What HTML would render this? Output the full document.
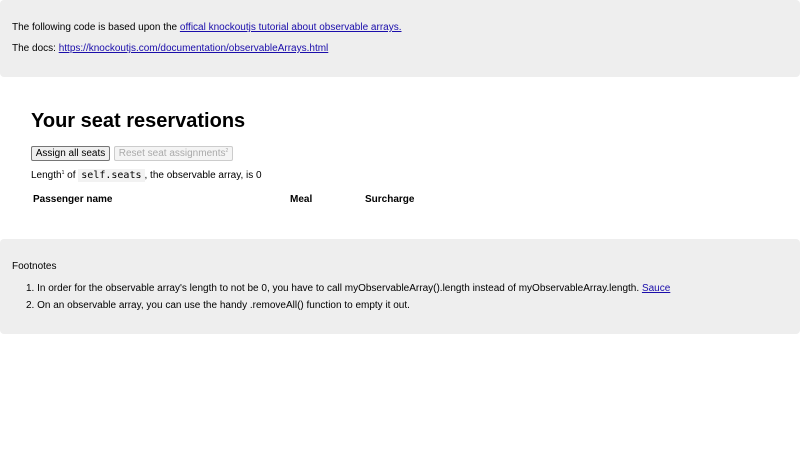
<!DOCTYPE html>
<html><head><meta charset="utf-8"><style>
body{margin:0;width:800px;height:450px;background:#fff;font-family:"Liberation Sans",sans-serif;font-size:10px;color:#000;position:relative;overflow:hidden}
.box{position:absolute;left:0;width:800px;background:#eee;border-radius:4px}
a{color:#1a0dab}
.abs{position:absolute;white-space:nowrap;line-height:12px}
.btn{position:absolute;top:146px;height:13px;line-height:13px;font-size:10px;border:1px solid #767676;background:#efefef;border-radius:2px;text-align:center;white-space:nowrap;box-sizing:content-box}
sup{font-size:5px;line-height:0;vertical-align:4px}
code{font-family:"DejaVu Sans Mono",monospace;font-size:10px;background:#f2f2f2;padding:1px 3px}
</style></head><body>
<div class="box" style="top:0;height:77px"></div>
<div class="abs" style="left:12px;top:22px">The following code is based upon the <a href="#">offical knockoutjs tutorial about observable arrays.</a></div>
<div class="abs" style="left:12px;top:43px">The docs: <a href="#">https://knockoutjs.com/documentation/observableArrays.html</a></div>
<div class="abs" style="left:31px;top:109px;font-size:20px;line-height:24px;font-weight:bold">Your seat reservations</div>
<div class="btn" style="left:31px;width:77px">Assign all seats</div>
<div class="btn" style="left:114px;width:117px;color:#aaa;border-color:#ccc;background:#f4f4f4">Reset seat assignments<sup>2</sup></div>
<div class="abs" style="left:31px;top:170px">Length<sup>1</sup> of <code>self.seats</code>, the observable array, is 0</div>
<div class="abs" style="left:33px;top:194px;font-weight:bold">Passenger name</div>
<div class="abs" style="left:290px;top:194px;font-weight:bold">Meal</div>
<div class="abs" style="left:365px;top:194px;font-weight:bold">Surcharge</div>
<div class="box" style="top:239px;height:95px"></div>
<div class="abs" style="left:12px;top:261px">Footnotes</div>
<div class="abs" style="left:26px;top:283px">1. In order for the observable array's length to not be 0, you have to call myObservableArray().length instead of myObservableArray.length. <a href="#">Sauce</a></div>
<div class="abs" style="left:26px;top:300px">2. On an observable array, you can use the handy .removeAll() function to empty it out.</div>
</body></html>
